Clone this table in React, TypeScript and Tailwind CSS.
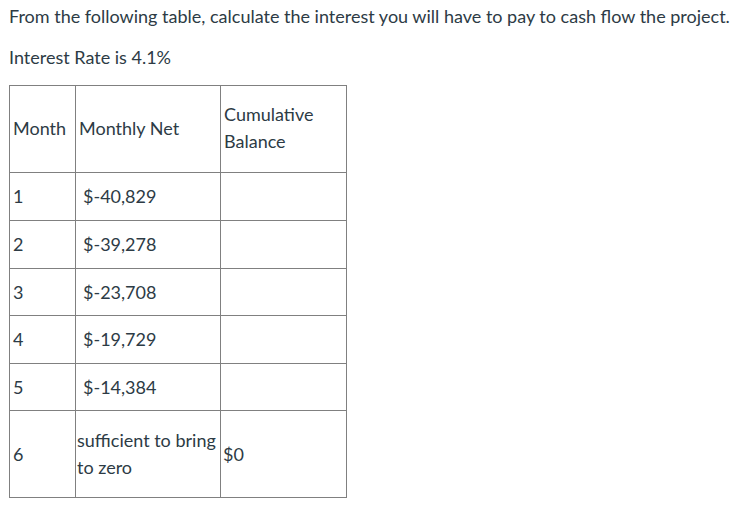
const rows = [
  { month: "1", net: "$-40,829", h: "h-[48px]" },
  { month: "2", net: "$-39,278", h: "h-[48px]" },
  { month: "3", net: "$-23,708", h: "h-[47px]" },
  { month: "4", net: "$-19,729", h: "h-[48px]" },
  { month: "5", net: "$-14,384", h: "h-[47px]" },
];

export default function App() {
  return (
    <div
      className="min-h-[511px] bg-white px-[9px] pt-[3px] text-[18px] leading-[27px] text-[#2d3b45]"
      style={{ fontFamily: "Lato, 'Noto Sans', sans-serif" }}
    >
      <p>
        From the following table, calculate the interest you will have to pay to cash flow the
        project.
      </p>
      <p className="mt-[14px]">Interest Rate is 4.1%</p>

      <table className="mt-[14px] w-[337px] table-fixed border-collapse border border-[#808080]">
        <colgroup>
          <col className="w-[66px]" />
          <col className="w-[145px]" />
          <col className="w-[126px]" />
        </colgroup>
        <tbody>
          <tr>
            <td className="h-[87px] border border-[#808080] px-[3px] pb-[2px] align-middle">Month</td>
            <td className="border border-[#808080] px-[3px] pb-[2px] align-middle">Monthly Net</td>
            <td className="border border-[#808080] px-[3px] pb-[2px] align-middle">
              Cumulative
              <br />
              Balance
            </td>
          </tr>
          {rows.map((r) => (
            <tr key={r.month}>
              <td className={`${r.h} border border-[#808080] px-[3px] align-middle`}>{r.month}</td>
              <td className="border border-[#808080] pl-[7px] pr-[3px] align-middle">{r.net}</td>
              <td className="border border-[#808080] px-[3px] align-middle"></td>
            </tr>
          ))}
          <tr>
            <td className="h-[87px] border border-[#808080] px-[3px] align-middle">6</td>
            <td className="border border-[#808080] px-[1px] align-middle">
              sufficient to bring
              <br />
              to zero
            </td>
            <td className="border border-[#808080] px-[2px] align-middle">$0</td>
          </tr>
        </tbody>
      </table>
    </div>
  );
}
